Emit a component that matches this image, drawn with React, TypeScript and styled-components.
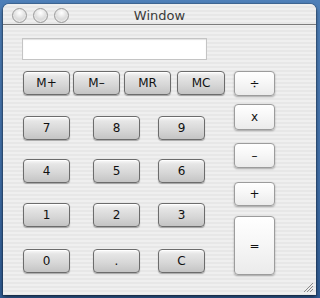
import React from "react";
import styled, { createGlobalStyle } from "styled-components";

const GlobalStyle = createGlobalStyle`
	html, body {
		margin: 0;
		padding: 0;
		width: 320px;
		height: 298px;
		overflow: hidden;
		background: linear-gradient(180deg, #4f80b9 0%, #3f6ea8 60%, #2f5b93 100%);
		font-family: "DejaVu Sans", "Liberation Sans", sans-serif;
	}
`;

const pinstripe = `repeating-linear-gradient(
	to bottom,
	#efefef 0px,
	#efefef 2px,
	#e7e7e7 2px,
	#e7e7e7 4px
)`;

const Desktop = styled.div`
	width: 320px;
	height: 298px;
	padding: 4px 4px 0 3px;
	box-sizing: border-box;
`;

const Window = styled.div`
	position: relative;
	width: 313px;
	height: 291px;
	display: flex;
	flex-direction: column;
	border-radius: 6px 6px 0 0;
	background: ${pinstripe};
	box-shadow: 0 2px 4px rgba(0, 0, 0, 0.55), 0 0 0 1px rgba(0, 0, 0, 0.15);
	overflow: hidden;
`;

const TitleBar = styled.div`
	height: 21px;
	flex: none;
	display: flex;
	align-items: center;
	padding: 2px 0 0 9px;
	box-sizing: border-box;
	position: relative;
	border-bottom: 1px solid #7c7c7c;
	background: ${pinstripe};
`;

const Light = styled.span`
	width: 13px;
	height: 13px;
	margin-right: 6px;
	border-radius: 50%;
	border: 1px solid #9a9a9a;
	background: radial-gradient(circle at 50% 30%, #ffffff 0%, #e2e2e2 45%, #bdbdbd 100%);
	box-shadow: inset 0 -1px 2px rgba(255, 255, 255, 0.8);
`;

const Title = styled.div`
	position: absolute;
	left: 0;
	right: 0;
	top: 4px;
	text-align: center;
	font-size: 13px;
	color: #3a3a3a;
	pointer-events: none;
`;

const Content = styled.div`
	flex: 1;
	display: flex;
	align-items: flex-start;
	padding: 13px 0 0 19px;
`;

const LeftColumn = styled.div`
	display: flex;
	flex-direction: column;
`;

const Display = styled.div`
	width: 183px;
	height: 20px;
	background: #ffffff;
	border: 1px solid #c4c4c4;
	box-shadow: inset 0 1px 1px rgba(0, 0, 0, 0.12);
`;

const MemoryRow = styled.div`
	display: flex;
	margin: 11px 0 0 1px;
`;

const Pad = styled.div`
	display: grid;
	grid-template-columns: 70px 65px 47px;
	margin: 21px 0 0 1px;
`;

const Key = styled.button<{ $w?: number; $ml?: number; $mt?: number }>`
	width: ${(p) => p.$w ?? 47}px;
	height: 24px;
	margin-left: ${(p) => p.$ml ?? 0}px;
	margin-top: ${(p) => p.$mt ?? 0}px;
	padding: 0;
	justify-self: start;
	border: 1px solid #6c6c6c;
	border-radius: 4px;
	background: linear-gradient(180deg, #fbfbfb 0%, #e6e6e6 18%, #d6d6d6 60%, #c4c4c4 100%);
	box-shadow: 0 1px 1px rgba(0, 0, 0, 0.3), inset 0 1px 0 #ffffff;
	font-family: "DejaVu Sans", "Liberation Sans", sans-serif;
	font-size: 12px;
	color: #111;
	line-height: 22px;
`;

const OpColumn = styled.div`
	display: flex;
	flex-direction: column;
	margin: 33px 0 0 9px;
`;

const OpKey = styled.button<{ $h: number; $mt: number }>`
	width: 41px;
	height: ${(p) => p.$h}px;
	margin-top: ${(p) => p.$mt}px;
	padding: 0;
	border: 1px solid #9c9c9c;
	border-radius: 4px;
	background: linear-gradient(180deg, #ffffff 0%, #f7f7f7 45%, #ebebeb 100%);
	box-shadow: 0 1px 2px rgba(0, 0, 0, 0.3);
	font-family: "DejaVu Sans", "Liberation Sans", sans-serif;
	font-size: 12px;
	color: #111;
`;

const Grip = styled.svg`
	position: absolute;
	right: 2px;
	bottom: 2px;
`;

const digitRows = [
	{ keys: ["7", "8", "9"], mt: 0 },
	{ keys: ["4", "5", "6"], mt: 19 },
	{ keys: ["1", "2", "3"], mt: 20 },
	{ keys: ["0", ".", "C"], mt: 22 },
];

const ops = [
	{ label: "÷", h: 25, mt: 0 },
	{ label: "x", h: 26, mt: 8 },
	{ label: "–", h: 25, mt: 13 },
	{ label: "+", h: 24, mt: 14 },
	{ label: "=", h: 59, mt: 10 },
];

const App: React.FC = () => {
	return (
		<>
			<GlobalStyle />
			<Desktop>
				<Window>
					<TitleBar>
						<Light />
						<Light />
						<Light />
						<Title>Window</Title>
					</TitleBar>
					<Content>
						<LeftColumn>
							<Display />
							<MemoryRow>
								<Key>M+</Key>
								<Key $ml={3}>M–</Key>
								<Key $ml={4}>MR</Key>
								<Key $ml={6} $w={48}>
									MC
								</Key>
							</MemoryRow>
							<Pad>
								{digitRows.map((row) =>
									row.keys.map((k) => (
										<Key key={k} $mt={row.mt}>
											{k}
										</Key>
									))
								)}
							</Pad>
						</LeftColumn>
						<OpColumn>
							{ops.map((o) => (
								<OpKey key={o.label} $h={o.h} $mt={o.mt}>
									{o.label}
								</OpKey>
							))}
						</OpColumn>
					</Content>
					<Grip width="11" height="11" viewBox="0 0 11 11">
						<path d="M10 1 L1 10 M10 4 L4 10 M10 7 L7 10" stroke="#8a8a8a" strokeWidth="1" />
					</Grip>
				</Window>
			</Desktop>
		</>
	);
};

export default App;
